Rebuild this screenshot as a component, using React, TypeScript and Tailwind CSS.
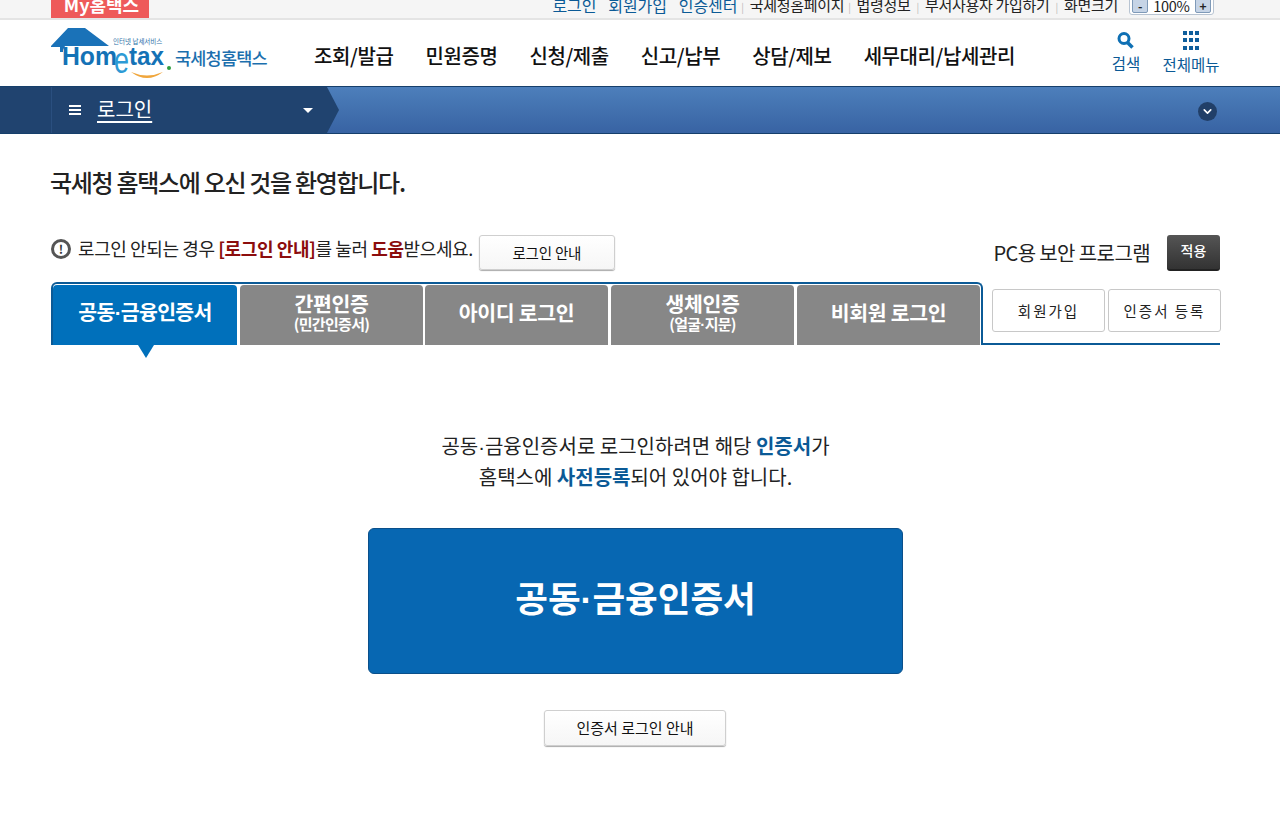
import { ChevronDown } from 'lucide-react';
import type { ReactNode } from 'react';

const kr = "font-['Noto_Sans_CJK_KR','Liberation_Sans',sans-serif]";

const navItems = ['조회/발급', '민원증명', '신청/제출', '신고/납부', '상담/제보', '세무대리/납세관리'];

// the middle dot is much narrower in the original font
function Dot() {
  return <span className="font-['Liberation_Sans',sans-serif]">·</span>;
}

function Logo() {
  return (
    <svg width="222" height="58" viewBox="0 0 222 58" className="block">
      <path d="M1 20 L18 2 L35 2 L59 20 L15 20 L13 24 L13 26 L10 26 L10 21 L1 21 Z" fill="#1a72b8" />
      <text x="63" y="18" fontSize="6.5" fill="#2a6fa8" fontFamily="Noto Sans CJK KR">인터넷 납세서비스</text>
      <text x="12" y="39" fontSize="26" fontWeight="700" fill="#1472b6" fontFamily="Liberation Sans" textLength="55" lengthAdjust="spacingAndGlyphs">Hom</text>
      <text x="64" y="47" fontSize="36" fill="#2d9ad5" fontFamily="Liberation Sans" textLength="15" lengthAdjust="spacingAndGlyphs">e</text>
      <text x="79" y="39" fontSize="26" fontWeight="700" fill="#1472b6" fontFamily="Liberation Sans" textLength="35" lengthAdjust="spacingAndGlyphs">tax</text>
      <circle cx="119" cy="42" r="2" fill="#2e9e3f" />
      <path d="M81 46 Q97 58 113 46 Q97 53 81 46 Z" fill="#f0a63c" />
      <text x="125" y="39" fontSize="17.5" fontWeight="500" fill="#1c6fae" fontFamily="Noto Sans CJK KR" letterSpacing="-0.8">국세청홈택스</text>
    </svg>
  );
}

function Sep({ className = '' }: { className?: string }) {
  return <span className={`text-[#bbb] text-[10px] mt-[2px] ${className}`}>|</span>;
}

function TopBar() {
  return (
    <div className="h-5 bg-[#f5f5f5] border-b-2 border-[#e4e4e4] overflow-hidden">
      <div className="ml-[51px] w-[1163px] flex justify-between h-[18px]">
        <div className="w-[98px] h-[19px] bg-[#ee5a5a] text-white text-[18px] font-bold flex justify-center leading-none pl-[3px]">
          <span className="-mt-[5px]">My홈택스</span>
        </div>
        <div className="flex items-start gap-[6px] -mt-[4px] text-[15px] leading-[18px] text-[#222] tracking-[-0.3px]">
          <div className="flex gap-[12px] -mr-[2px] text-[#0b5a96] text-[16px] tracking-[-0.1px]">
            <span>로그인</span>
            <span>회원가입</span>
            <span>인증센터</span>
          </div>
          <Sep />
          <span>국세청홈페이지</span>
          <Sep className="-ml-[2px]" />
          <span>법령정보</span>
          <Sep />
          <span>부서사용자 가입하기</span>
          <Sep />
          <span>화면크기</span>
          <div className="ml-[5px] flex items-center gap-[1px] h-[19px] w-[85px] px-[2px] border border-[#b8c4d2] rounded-[3px] bg-white">
            <span className="w-[16px] h-[15px] bg-[#c6d4e6] border border-[#7f9ab8] rounded-[2px] flex items-center justify-center text-[12px] font-bold leading-none">-</span>
            <span className="text-[14.5px] flex-1 text-center">100%</span>
            <span className="w-[16px] h-[15px] bg-[#c6d4e6] border border-[#7f9ab8] rounded-[2px] flex items-center justify-center text-[12px] font-bold leading-none">+</span>
          </div>
        </div>
      </div>
    </div>
  );
}

function Header() {
  return (
    <div className="h-[66px] bg-white flex items-start">
      <div className="ml-[50px] mt-[6px] w-[264px]">
        <Logo />
      </div>
      <nav className="flex gap-[32px] mt-[20px] text-[20px] font-medium leading-[32px] text-[#111] tracking-[-0.4px]">
        {navItems.map((item) => (
          <span key={item}>{item}</span>
        ))}
      </nav>
      <div className="ml-auto mr-[59px] flex gap-[20px] mt-[9px] text-[#0b5a96] text-[15.5px] leading-[20px]">
        <div className="flex flex-col items-center w-[30px]">
          <svg width="19" height="19" viewBox="0 0 19 19" className="mt-[2px] -ml-[2px]">
            <circle cx="8" cy="7.5" r="5" fill="none" stroke="#0f70b4" strokeWidth="3" />
            <path d="M11.5 11.5 L16.5 16.5" stroke="#0f70b4" strokeWidth="3.6" />
          </svg>
          <span className="mt-[3px]">검색</span>
        </div>
        <div className="flex flex-col items-center w-[60px]">
          <div className="grid grid-cols-3 gap-[2px] w-[16px] h-[20px] mt-[2px]">
            {Array.from({ length: 9 }).map((_, i) => (
              <span key={i} className="w-[4px] h-[4px] bg-[#0f5e9c]" />
            ))}
          </div>
          <span className="mt-[3px]">전체메뉴</span>
        </div>
      </div>
    </div>
  );
}

function LoginBar() {
  return (
    <div className="h-12 flex bg-gradient-to-b from-[#4d7fbb] to-[#3863a3] border-y border-[#163f6b]">
      <div className="w-[51px] bg-[#20436f]" />
      <div className="w-[276px] bg-[#20436f] flex items-center border-l border-[#2a4f7f] text-white">
        <div className="ml-[17px] flex flex-col gap-[2px] w-[12px]">
          <span className="h-[2px] bg-white" />
          <span className="h-[2px] bg-white" />
          <span className="h-[2px] bg-white" />
        </div>
        <span className="ml-[16px] text-[20px] underline underline-offset-[4px] leading-none -mt-[2px]">로그인</span>
        <span className="ml-auto mr-[14px] w-0 h-0 border-x-[5px] border-x-transparent border-t-[5px] border-t-white" />
      </div>
      <svg width="12" height="46" viewBox="0 0 12 46" className="block">
        <path d="M0 0 L12 23 L0 46 Z" fill="#20436f" />
      </svg>
      <div className="ml-auto mr-[63px] self-center mt-[3px] w-[19px] h-[19px] rounded-full bg-[#213f68] flex items-center justify-center">
        <ChevronDown size={13} strokeWidth={3} className="text-white" />
      </div>
    </div>
  );
}

function GrayButton({ label, className }: { label: string; className: string }) {
  return (
    <button className={`bg-gradient-to-b from-white to-[#f6f6f6] border border-[#cfcfcf] rounded-[3px] shadow-[0_1px_1px_#aaa] text-[#111] ${className}`}>
      {label}
    </button>
  );
}

function Tab({ title, sub, active, className }: { title: ReactNode; sub?: ReactNode; active?: boolean; className: string }) {
  return (
    <div className={`h-[60px] pb-[6px] rounded-t-[4px] flex flex-col items-center justify-center text-white font-bold ${active ? 'bg-[#0070bb]' : 'bg-[#878787]'} ${className}`}>
      <span className={`text-[20.5px] leading-[24px] ${active ? 'tracking-[-0.7px]' : 'tracking-[-0.3px]'}`}>{title}</span>
      {sub && <span className="text-[15px] leading-[18px] font-bold tracking-[-0.7px]">{sub}</span>}
    </div>
  );
}

export default function App() {
  return (
    <div className={`h-[826px] bg-white overflow-hidden ${kr}`}>
      <TopBar />
      <Header />
      <LoginBar />

      <main className="ml-[51px] w-[1169px]">
        <h1 className="mt-[30px] -ml-[1px] text-[24px] leading-[36px] font-medium text-[#222] tracking-[-1.3px]">
          국세청 홈택스에 오신 것을 환영합니다.
        </h1>

        <div className="mt-[35px] h-[37px] flex items-start">
          <div className="mt-[4px] w-[20px] h-[20px] rounded-full border-[3px] border-[#555] flex items-center justify-center text-[12px] font-bold text-[#333] leading-none">!</div>
          <p className="ml-[7px] text-[18px] leading-[26px] text-[#222] tracking-[-0.4px]">
            로그인 안되는 경우 <b className="text-[#8c0d0d]">[로그인 안내]</b>를 눌러 <b className="text-[#8c0d0d]">도움</b>받으세요.
          </p>
          <GrayButton label="로그인 안내" className="ml-[6px] w-[136px] h-[35px] text-[14.5px] tracking-[-0.2px]" />
          <span className="ml-auto mt-[5px] mr-[17px] text-[20px] leading-[26px] text-[#222] tracking-[-0.6px]">PC용 보안 프로그램</span>
          <button className="w-[53px] h-[36px] rounded-[3px] bg-gradient-to-b from-[#555] to-[#333] border-b-2 border-[#222] text-white text-[14px] font-medium pb-[4px]">적용</button>
        </div>

        <div className="mt-[10px] relative flex items-end h-[63px] border-b-2 border-[#0b5a96]">
          <div className="w-[932px] h-[63px] -mb-[2px] border-2 border-b-0 border-[#0b5a96] rounded-t-[6px] bg-white flex pt-[1px]">
            <Tab title={<>공동<Dot />금융인증서</>} active className="w-[184px]" />
            <Tab title="간편인증" sub="(민간인증서)" className="ml-[3px] w-[183px]" />
            <Tab title="아이디 로그인" className="ml-[2px] w-[183px]" />
            <Tab title="생체인증" sub={<>(얼굴<Dot />지문)</>} className="ml-[3px] w-[183px]" />
            <Tab title="비회원 로그인" className="ml-[3px] w-[183px]" />
          </div>
          <div className="absolute -right-[1px] top-[7px] flex gap-[3px] text-[14.5px] tracking-[2px]">
            <button className="w-[113px] h-[43px] bg-white border border-[#c8c8c8] rounded-[3px] text-[#222]">회원가입</button>
            <button className="w-[113px] h-[43px] bg-white border border-[#c8c8c8] rounded-[3px] text-[#222]">인증서 등록</button>
          </div>
          <span className="absolute left-[87px] -bottom-[15px] w-0 h-0 border-x-[8px] border-x-transparent border-t-[13px] border-t-[#0070bb]" />
        </div>

        <div className="flex flex-col items-center">
          <p className="mt-[86px] text-center text-[20px] leading-[30px] text-[#222]">
            공동<Dot />금융인증서로 로그인하려면 해당 <b className="text-[#0b5a96]">인증서</b>가
            <br />
            홈택스에 <b className="text-[#0b5a96]">사전등록</b>되어 있어야 합니다.
          </p>
          <button className="mt-[36px] w-[535px] h-[146px] bg-[#0767b2] border border-[#0a4f8a] rounded-[6px] text-white text-[35.5px] font-bold pb-[4px]">
            공동<Dot />금융인증서
          </button>
          <GrayButton label="인증서 로그인 안내" className="mt-[36px] w-[182px] h-[36px] text-[15px] -ml-[1px]" />
        </div>
      </main>
    </div>
  );
}
